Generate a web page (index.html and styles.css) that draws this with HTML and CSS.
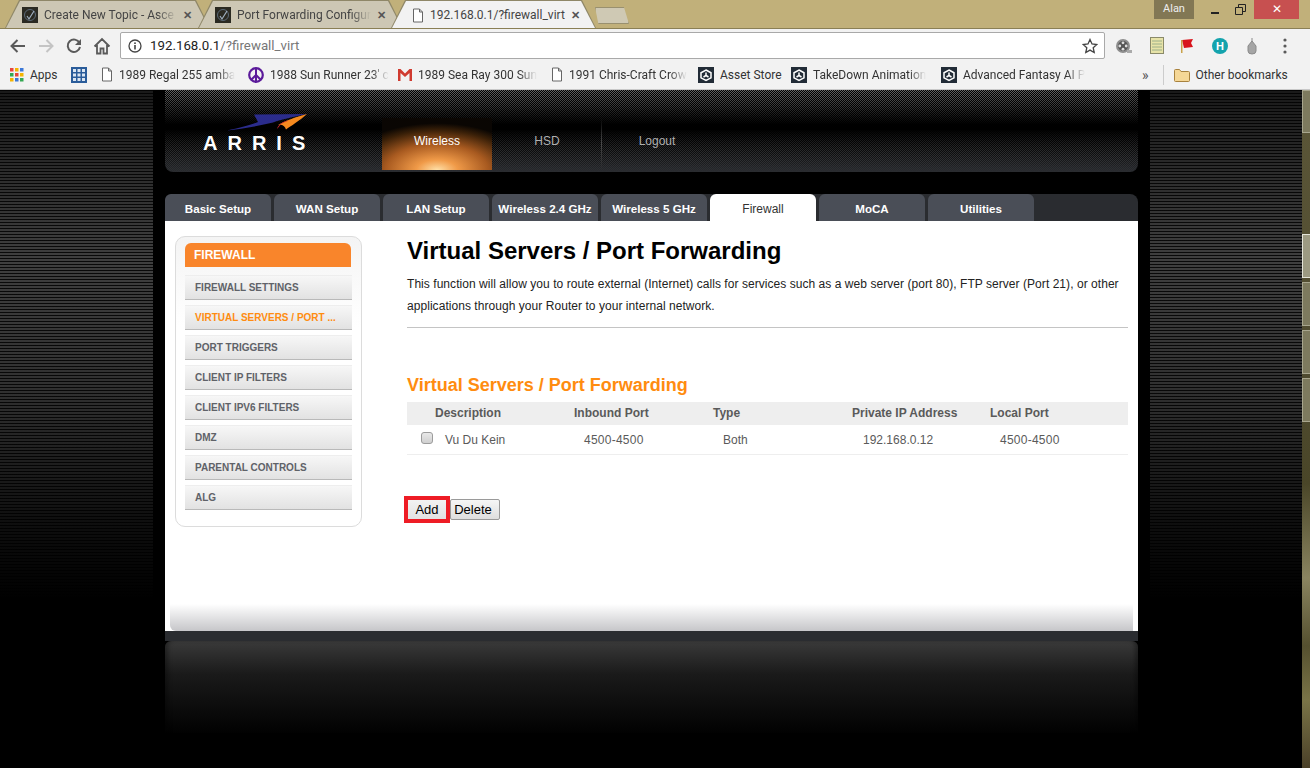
FILE: index.html
```html
<!DOCTYPE html>
<html lang="en">
<head>
    <meta charset="UTF-8">
    <title>192.168.0.1/?firewall_virt</title>
    <link rel="stylesheet" href="styles.css">
</head>
<body>

    <!-- Browser chrome -->
    <div class="tabstrip">
        <div class="tab tab-one">
            <span class="favicon-dark"><svg width="16" height="16" viewBox="0 0 16 16"><circle cx="8" cy="8" r="5.5" fill="none" stroke="#5c6a78" stroke-width="1"/><path d="M5 9l2 3 5-8" fill="none" stroke="#9fb0c0" stroke-width="1.2"/></svg></span>
            <span class="tab-title">Create New Topic - Asce</span>
            <span class="tab-close">✕</span>
        </div>
        <div class="tab tab-two">
            <span class="favicon-dark"><svg width="16" height="16" viewBox="0 0 16 16"><circle cx="8" cy="8" r="5.5" fill="none" stroke="#5c6a78" stroke-width="1"/><path d="M5 9l2 3 5-8" fill="none" stroke="#9fb0c0" stroke-width="1.2"/></svg></span>
            <span class="tab-title">Port Forwarding Configur</span>
            <span class="tab-close">✕</span>
        </div>
        <div class="tab tab-active">
            <svg class="page-icon" width="12" height="15" viewBox="0 0 12 15"><path d="M1.5 1h6l3 3v10h-9z M7.5 1v3h3" fill="#fff" stroke="#666"/></svg>
            <span class="tab-title tab-title-full">192.168.0.1/?firewall_virt</span>
            <span class="tab-close">✕</span>
        </div>
        <div class="tab-new"></div>
        <div class="window-controls">
            <span class="profile">Alan</span>
            <svg class="win-btn" width="46" height="20" viewBox="0 0 46 20"><rect x="17" y="12" width="8" height="2" fill="#222"/></svg>
            <svg class="win-btn win-restore" width="26" height="20" viewBox="0 0 26 20"><path d="M7.5 7.5h7v7h-7z M10.5 7.500v-3h7v7h-3" fill="none" stroke="#222"/></svg>
            <span class="win-close">✕</span>
        </div>
    </div>

    <div class="toolbar">
        <svg class="nav-icon" width="20" height="20" viewBox="0 0 20 20"><path d="M17 10H4M9.5 4L3.5 10l6 6" fill="none" stroke="#5a5a5a" stroke-width="2"/></svg>
        <svg class="nav-icon" width="20" height="20" viewBox="0 0 20 20"><path d="M3 10h13M10.5 4l6 6-6 6" fill="none" stroke="#c4c4c4" stroke-width="2"/></svg>
        <svg class="nav-icon" width="20" height="20" viewBox="0 0 20 20"><path d="M15.5 7A6.200 6.200 0 1 0 16 11" fill="none" stroke="#5a5a5a" stroke-width="2"/><path d="M17 3v6h-6z" fill="#5a5a5a"/></svg>
        <svg class="nav-icon" width="20" height="20" viewBox="0 0 20 20"><path d="M2.500 10.500L10 3l7.500 7.500M5 9v8.500h3.500v-5h3v5H15V9" fill="none" stroke="#5a5a5a" stroke-width="1.8"/></svg>
        <div class="omnibox">
            <svg width="14" height="14" viewBox="0 0 14 14"><circle cx="7" cy="7" r="6" fill="none" stroke="#444" stroke-width="1.3"/><rect x="6.200" y="6" width="1.6" height="4.5" fill="#444"/><rect x="6.200" y="3.400" width="1.6" height="1.6" fill="#444"/></svg>
            <span class="url"><span class="url-host">192.168.0.1</span>/?firewall_virt</span>
            <svg class="star" width="16" height="16" viewBox="0 0 16 16"><path d="M8 1.500l2 4.500 4.800.5-3.600 3.200 1 4.800L8 12.100l-4.200 2.400 1-4.800L1.200 6.500 6 6z" fill="none" stroke="#444" stroke-width="1.3"/></svg>
        </div>
        <div class="extensions">
            <svg width="18" height="18" viewBox="0 0 18 18"><circle cx="8" cy="9" r="7" fill="#8d8d8d"/><circle cx="8" cy="9" r="5" fill="#555"/><circle cx="8" cy="5.800" r="1.4" fill="#ddd"/><circle cx="8" cy="12.200" r="1.4" fill="#ddd"/><circle cx="4.800" cy="9" r="1.4" fill="#ddd"/><circle cx="11.200" cy="9" r="1.4" fill="#ddd"/><rect x="12" y="13" width="5" height="3" fill="#aaa"/></svg>
            <svg width="14" height="17" viewBox="0 0 14 17"><rect x=".5" y=".5" width="13" height="16" fill="#e7e3a8" stroke="#8a8a6a"/><path d="M2 4h10M2 7h10M2 10h10M2 13h10" stroke="#9cb08a"/></svg>
            <svg width="14" height="16" viewBox="0 0 14 16"><path d="M2 2l11-1-2 4 2 4-9 1z" fill="#d8141c"/><rect x="1" y="2" width="1.5" height="13" fill="#c9a24a"/></svg>
            <svg width="18" height="18" viewBox="0 0 18 18"><circle cx="9" cy="9" r="8" fill="#14a3ad"/><text class="ext-letter" x="9" y="13" text-anchor="middle">H</text></svg>
            <svg width="14" height="18" viewBox="0 0 14 18"><path d="M7 1v4M3 9l4-5 4 5v5a4 3 0 0 1-8 0z" fill="#a5a5a5" stroke="#8a8a8a"/></svg>
            <svg class="menu-dots" width="4" height="16" viewBox="0 0 4 16"><circle cx="2" cy="2" r="1.6" fill="#5a5a5a"/><circle cx="2" cy="8" r="1.6" fill="#5a5a5a"/><circle cx="2" cy="14" r="1.6" fill="#5a5a5a"/></svg>
        </div>
    </div>

    <div class="bookmarks">
        <a class="bm bm-apps">
            <svg width="14" height="14" viewBox="0 0 14 14"><rect width="3.5" height="3.5" fill="#e8453c"/><rect x="5" width="3.5" height="3.5" fill="#f4b400"/><rect x="10" width="3.5" height="3.5" fill="#3c78d8"/><rect y="5" width="3.5" height="3.5" fill="#34a853"/><rect x="5" y="5" width="3.5" height="3.5" fill="#e8453c"/><rect x="10" y="5" width="3.5" height="3.5" fill="#f4b400"/><rect y="10" width="3.5" height="3.5" fill="#f4b400"/><rect x="5" y="10" width="3.5" height="3.5" fill="#3c78d8"/><rect x="10" y="10" width="3.5" height="3.5" fill="#34a853"/></svg>
            <span>Apps</span>
        </a>
        <svg class="bm-grid" width="16" height="16" viewBox="0 0 16 16"><rect width="16" height="16" fill="#2a5c9a"/><path d="M2 2h3v3H2zm4.500 0h3v3h-3zM11 2h3v3h-3zM2 6.500h3v3H2zm4.500 0h3v3h-3zm4.500 0h3v3h-3zM2 11h3v3H2zm4.500 0h3v3h-3zm4.500 0h3v3h-3z" fill="#dbe6f2"/></svg>
        <a class="bm bm-a"><svg width="12" height="15" viewBox="0 0 12 15"><path d="M1.5 1h6l3 3v10h-9z M7.5 1v3h3" fill="#fff" stroke="#666"/></svg><span class="bm-label">1989 Regal 255 amba</span></a>
        <a class="bm bm-b"><svg width="16" height="16" viewBox="0 0 16 16"><circle cx="8" cy="8" r="6.800" fill="none" stroke="#5b1a9a" stroke-width="2.2"/><path d="M8 1v14M8 8l-5 5M8 8l5 5" stroke="#5b1a9a" stroke-width="2"/></svg><span class="bm-label">1988 Sun Runner 23' c</span></a>
        <a class="bm bm-c"><svg width="14" height="12" viewBox="0 0 14 12"><path d="M0 0h2.500L7 4.500 11.500 0H14v12h-2.500V4L7 8 2.500 4v8H0z" fill="#d03a2f"/></svg><span class="bm-label">1989 Sea Ray 300 Sun</span></a>
        <a class="bm bm-d"><svg width="12" height="15" viewBox="0 0 12 15"><path d="M1.5 1h6l3 3v10h-9z M7.5 1v3h3" fill="#fff" stroke="#666"/></svg><span class="bm-label">1991 Chris-Craft Crow</span></a>
        <a class="bm bm-e"><svg width="16" height="16" viewBox="0 0 16 16"><rect width="16" height="16" fill="#222c37"/><path d="M8 3l5 2.800v5L8 13.500 3 10.800v-5zM8 5.500v3l-2.500 1.500M8 8.500l2.500 1.500" fill="none" stroke="#fff" stroke-width="1.5"/></svg><span>Asset Store</span></a>
        <a class="bm bm-f"><svg width="16" height="16" viewBox="0 0 16 16"><rect width="16" height="16" fill="#222c37"/><path d="M8 3l5 2.800v5L8 13.500 3 10.800v-5zM8 5.500v3l-2.500 1.500M8 8.500l2.500 1.500" fill="none" stroke="#fff" stroke-width="1.5"/></svg><span class="bm-label">TakeDown Animation</span></a>
        <a class="bm bm-g"><svg width="16" height="16" viewBox="0 0 16 16"><rect width="16" height="16" fill="#222c37"/><path d="M8 3l5 2.800v5L8 13.500 3 10.800v-5zM8 5.500v3l-2.500 1.500M8 8.500l2.500 1.500" fill="none" stroke="#fff" stroke-width="1.5"/></svg><span class="bm-label">Advanced Fantasy AI P</span></a>
        <span class="bm-more">»</span>
        <a class="bm bm-other"><svg width="16" height="14" viewBox="0 0 16 14"><path d="M.5 2.500a1 1 0 0 1 1-1h4l1.500 2h7.500a1 1 0 0 1 1 1v8a1 1 0 0 1-1 1h-13a1 1 0 0 1-1-1z" fill="#f5d796" stroke="#a8823e"/></svg><span>Other bookmarks</span></a>
    </div>

    <!-- Router page -->
    <div class="page">
        <div class="stripes stripes-left"></div>

        <div class="router">
            <div class="header">
                <div class="logo">
                    <svg width="80" height="18" viewBox="0 0 80 18">
                        <path d="M0 17.500C12 15 24 12 31 9L27 1.500 80 1C66 4 52 7 46 9.500 32 13 14 16 0 17.500z" fill="#2b2c8c"/>
                        <path d="M80 1C72 8 64 13 59 16.500 58 12 54 11 51 12 58 8 68 4 80 1z" fill="#f58a1f"/>
                        <path d="M50 16C51 12 56 8 62 7.500 56 9.500 54 11 53 12.500 52 13.500 51 15 50 16z" fill="#c9252c"/>
                    </svg>
                    <div class="logo-text">ARRIS</div>
                </div>
                <nav class="mainnav">
                    <a class="mainnav-item active">Wireless</a>
                    <a class="mainnav-item sep">HSD</a>
                    <a class="mainnav-item">Logout</a>
                </nav>
            </div>

            <div class="tabs">
                <a class="rtab">Basic Setup</a>
                <a class="rtab">WAN Setup</a>
                <a class="rtab">LAN Setup</a>
                <a class="rtab">Wireless 2.4 GHz</a>
                <a class="rtab">Wireless 5 GHz</a>
                <a class="rtab current">Firewall</a>
                <a class="rtab">MoCA</a>
                <a class="rtab">Utilities</a>
            </div>

            <div class="content">
                <div class="columns">
                    <aside class="sidebar">
                        <div class="side-head">FIREWALL</div>
                        <a class="side-item">FIREWALL SETTINGS</a>
                        <a class="side-item selected">VIRTUAL SERVERS / PORT ...</a>
                        <a class="side-item">PORT TRIGGERS</a>
                        <a class="side-item">CLIENT IP FILTERS</a>
                        <a class="side-item">CLIENT IPV6 FILTERS</a>
                        <a class="side-item">DMZ</a>
                        <a class="side-item">PARENTAL CONTROLS</a>
                        <a class="side-item">ALG</a>
                    </aside>

                    <main class="main">
                        <h1>Virtual Servers / Port Forwarding</h1>
                        <p>This function will allow you to route external (Internet) calls for services such as a web server (port 80), FTP server (Port 21), or other applications through your Router to your internal network.</p>
                        <div class="rule"></div>
                        <h2>Virtual Servers / Port Forwarding</h2>
                        <table class="servers">
                            <thead>
                                <tr>
                                    <th class="col-desc">Description</th>
                                    <th class="col-in">Inbound Port</th>
                                    <th class="col-type">Type</th>
                                    <th class="col-ip">Private IP Address</th>
                                    <th class="col-local">Local Port</th>
                                </tr>
                            </thead>
                            <tbody>
                                <tr>
                                    <td class="col-desc"><input type="checkbox" class="row-check"><span>Vu Du Kein</span></td>
                                    <td class="col-in cell-in">4500-4500</td>
                                    <td class="col-type cell-type">Both</td>
                                    <td class="col-ip cell-ip">192.168.0.12</td>
                                    <td class="col-local cell-local">4500-4500</td>
                                </tr>
                            </tbody>
                        </table>
                        <div class="actions">
                            <button class="btn btn-marked">Add</button>
                            <button class="btn btn-delete">Delete</button>
                        </div>
                    </main>
                </div>
                <div class="content-foot"></div>
            </div>

            <div class="foot-band"></div>
            <div class="foot-panel"></div>
        </div>

        <div class="stripes stripes-right"></div>

        <div class="desktop-edge">
            <div class="edge-chip edge-first"></div>
            <div class="edge-chip edge-light"></div>
            <div class="edge-chip"></div>
            <div class="edge-chip"></div>
            <div class="edge-chip"></div>
        </div>
    </div>

</body>
</html>
```

FILE: styles.css
```css
:root {
    --chrome-tan: #c1b07a;
    --chrome-bar: #f2f2f2;
    --orange: #f9852b;
    --orange-text: #ff8c10;
    --tab-grey: #4a4e57;
    --band: #2a2c30;
    --text: #5a5a5a;
}

* {
    box-sizing: border-box;
}

html, body {
    height: 100%;
}

body {
    margin: 0;
    height: 768px;
    overflow: hidden;
    display: flex;
    flex-direction: column;
    font-family: "Liberation Sans", Arial, sans-serif;
    background: #000;
}

/* Browser chrome */

.tabstrip {
    height: 29px;
    flex: none;
    display: flex;
    background: var(--chrome-tan);
    border-bottom: 1px solid #8a7f55;
    font-family: Roboto, "Noto Sans", sans-serif;
    font-size: 12px;
    color: #444;
}

.tab {
    position: relative;
    isolation: isolate;
    height: 28px;
    width: 205px;
    margin-right: -12px;
    padding: 2px 18px 0 17px;
    display: flex;
    align-items: center;
    gap: 6px;
    background: #8f8768;
    clip-path: polygon(0 100%, 14px 0, calc(100% - 14px) 0, 100% 100%);
    white-space: nowrap;
}

.tab::before {
    content: "";
    position: absolute;
    inset: 1px 1px 0;
    z-index: -1;
    background: #cdc7b4;
    clip-path: polygon(0 100%, 14px 0, calc(100% - 14px) 0, 100% 100%);
}

.tab-one {
    margin-left: 5px;
}

.tab-active {
    padding: 2px 16px 0 21px;
    z-index: 1;
}

.tab-active::before {
    background: var(--chrome-bar);
}

.favicon-dark {
    width: 16px;
    height: 16px;
    flex: none;
    background: #2b2a22;
}

.favicon-dark svg,
.page-icon {
    display: block;
    flex: none;
}

.tab-title {
    flex: 1;
    -webkit-mask-image: linear-gradient(90deg, #000 85%, transparent);
}

.tab-title-full {
    -webkit-mask-image: none;
}

.tab-close {
    font-size: 11px;
    font-weight: bold;
    color: #555;
}

.tab-new {
    width: 34px;
    height: 17px;
    margin: 7px 0 0 11px;
    background: #cfc9b4;
    border: 1px solid #99906f;
    clip-path: polygon(0 0, 85% 0, 100% 100%, 10% 100%);
}

.window-controls {
    margin-left: auto;
    display: flex;
    align-items: flex-start;
}

.profile {
    width: 40px;
    height: 19px;
    background: #827754;
    color: #eee;
    font-size: 11px;
    line-height: 18px;
    text-align: center;
}

.win-btn {
    display: block;
}

.win-restore {
    margin-left: -12px;
}

.win-close {
    width: 45px;
    height: 19px;
    margin-right: 11px;
    background: #c75050;
    color: #fff;
    font-size: 12px;
    line-height: 19px;
    text-align: center;
}

.toolbar {
    height: 33px;
    flex: none;
    display: flex;
    align-items: center;
    padding-left: 8px;
    background: var(--chrome-bar);
}

.nav-icon {
    margin-right: 8px;
    flex: none;
}

.omnibox {
    width: 985px;
    height: 27px;
    display: flex;
    align-items: center;
    gap: 8px;
    padding: 0 6px 0 7px;
    background: #fff;
    border: 1px solid #a9a9a9;
    border-radius: 2px;
    font-family: Roboto, "Noto Sans", sans-serif;
    font-size: 13.3px;
}

.url {
    flex: 1;
    color: #777;
}

.url-host {
    color: #222;
}

.extensions {
    flex: 1;
    display: flex;
    align-items: center;
    gap: 16.5px;
    padding-left: 10px;
}

.menu-dots {
    margin-left: 7px;
}

.ext-letter {
    font: bold 11px "Liberation Sans", sans-serif;
    fill: #fff;
}

.bookmarks {
    height: 28px;
    flex: none;
    display: flex;
    align-items: center;
    padding: 0 0 2px 10px;
    background: var(--chrome-bar);
    border-bottom: 1px solid #c8c8c8;
    font-family: Roboto, "Noto Sans", sans-serif;
    font-size: 12px;
    color: #333;
    white-space: nowrap;
}

.bm {
    display: flex;
    align-items: center;
    gap: 6px;
    flex: none;
}

.bm svg {
    flex: none;
}

.bm-label {
    -webkit-mask-image: linear-gradient(90deg, #000 85%, transparent);
}

.bm-apps { width: 61px; }
.bm-grid { flex: none; margin-right: 14px; }
.bm-a { width: 147px; }
.bm-b { width: 150px; }
.bm-c { width: 153px; }
.bm-d { width: 147px; }
.bm-e { width: 93px; }
.bm-f { width: 150px; }
.bm-g { width: 144px; }

.bm-more {
    margin-left: 57px;
    padding-right: 14px;
    border-right: 1px solid #ccc;
    font-size: 14px;
    line-height: 20px;
    color: #555;
}

.bm-other {
    margin-left: 10px;
}

/* Router page */

.page {
    flex: 1;
    display: flex;
    min-height: 0;
    background: #000;
}

.stripes {
    flex: none;
    background:
        linear-gradient(rgba(0, 0, 0, .6), rgba(0, 0, 0, 0) 25%, rgba(0, 0, 0, .25) 45%, rgba(0, 0, 0, .8) 65%, #000 75%),
        repeating-linear-gradient(#0a0a0a 0 1px, #3f3f3f 1px 3px);
}

.stripes-left {
    width: 153px;
}

.stripes-right {
    width: 152px;
}

.router {
    width: 973px;
    margin: 0 12px;
    flex: none;
    display: flex;
    flex-direction: column;
}

.header {
    height: 82px;
    flex: none;
    display: flex;
    border-radius: 0 0 8px 8px;
    background:
        linear-gradient(rgba(0, 0, 0, .15), #000 42%, #000 48%, rgba(0, 0, 0, 0) 100%),
        linear-gradient(transparent 50%, var(--band)),
        conic-gradient(#777 25%, transparent 0 50%, #777 0 75%, transparent 0) 0 0 / 2px 2px;
}

.logo {
    width: 217px;
    flex: none;
    padding: 23px 0 0 38px;
}

.logo svg {
    display: block;
    margin-left: 24px;
}

.logo-text {
    margin-top: 4px;
    font-size: 20px;
    font-weight: bold;
    letter-spacing: 10px;
    line-height: 16px;
    color: #fff;
}

.mainnav {
    display: flex;
}

.mainnav-item {
    width: 110px;
    height: 52px;
    margin-top: 28px;
    padding-top: 16px;
    font-size: 12px;
    line-height: 14px;
    text-align: center;
    color: #b0b0b0;
}

.mainnav-item.sep {
    background: linear-gradient(transparent, #4a4a4a 50%, transparent) right / 1px 100% no-repeat;
}

.mainnav-item.active {
    color: #fff;
    background: radial-gradient(ellipse 85% 90% at 50% 100%, #ffe0a8 0, #f09a48 22%, #a85a20 55%, #3a2008 85%, #0a0603 100%);
}

.tabs {
    height: 27px;
    margin-top: 22px;
    flex: none;
    display: flex;
    gap: 3px;
    background: var(--band);
    border-radius: 8px 8px 0 0;
}

.rtab {
    width: 106px;
    font-size: 11.6px;
    font-weight: bold;
    line-height: 30px;
    text-align: center;
    color: #fff;
    background: var(--tab-grey);
    border-radius: 6px 6px 0 0;
    white-space: nowrap;
}

.rtab.current {
    color: #333;
    font-size: 12px;
    font-weight: normal;
    background: #fff;
}

.content {
    height: 410px;
    flex: none;
    display: flex;
    flex-direction: column;
    justify-content: space-between;
    background: #fff;
}

.columns {
    display: flex;
    padding: 15px 10px 0;
    gap: 45px;
}

.sidebar {
    width: 187px;
    height: 291px;
    flex: none;
    padding: 6px 9px 0;
    background: linear-gradient(#f4f4f4, #fff 90px);
    border: 1px solid #dcdcdc;
    border-radius: 10px;
}

.side-head {
    width: 166px;
    height: 24px;
    margin-bottom: 8px;
    padding-left: 9px;
    font-size: 12px;
    font-weight: bold;
    line-height: 25px;
    color: #fff;
    background: var(--orange);
    border-radius: 6px 6px 0 0;
}

.side-item {
    display: block;
    height: 25px;
    margin-bottom: 5px;
    padding-left: 10px;
    font-size: 10px;
    font-weight: bold;
    line-height: 24px;
    color: #5f6268;
    background: linear-gradient(#f7f7f7, #e2e2e2);
    border-top: 1px solid #eee;
    border-bottom: 1px solid #b9b9b9;
    white-space: nowrap;
}

.side-item.selected {
    color: var(--orange-text);
}

.main {
    width: 721px;
    flex: none;
}

h1 {
    margin: 0;
    padding-top: 2px;
    font-size: 24px;
    line-height: 26px;
    color: #000;
}

.main p {
    margin: 9px 0 0;
    font-size: 12px;
    line-height: 22px;
    letter-spacing: .05px;
    color: #222;
}

.rule {
    height: 1px;
    margin-top: 10px;
    background: #c4c4c4;
}

h2 {
    margin: 47px 0 0;
    font-size: 18px;
    line-height: 20px;
    color: var(--orange-text);
}

.servers {
    width: 721px;
    margin-top: 7px;
    border-collapse: collapse;
    table-layout: fixed;
    font-size: 12px;
    color: var(--text);
}

.servers th {
    height: 23px;
    padding: 0 0 2px;
    background: #eee;
    text-align: left;
    font-weight: bold;
}

.servers td {
    height: 29px;
    padding: 1px 0 0;
    border-bottom: 1px solid #eee;
}

.col-desc { width: 167px; }
.col-in { width: 139px; }
.col-type { width: 139px; }
.col-ip { width: 138px; }

.servers th.col-desc {
    padding-left: 28px;
}

.row-check {
    appearance: none;
    width: 12px;
    height: 12px;
    margin: 0 12px 0 14px;
    vertical-align: 0;
    background: linear-gradient(#e9e9e9, #d0d0d0);
    border: 1px solid #9c9c9c;
    border-radius: 3px;
}

.servers .cell-in,
.servers .cell-local {
    padding-left: 10px;
    letter-spacing: .25px;
}

.servers .cell-type {
    padding-left: 10px;
}

.servers .cell-ip {
    padding-left: 11px;
}

.actions {
    display: flex;
    align-items: flex-start;
    margin-top: 44px;
}

.btn {
    height: 21px;
    padding: 0;
    font: 13px "Liberation Sans", Arial, sans-serif;
    color: #000;
    background: linear-gradient(#f6f6f6, #dedede);
    border: 1px solid #9a9a9a;
    border-radius: 2px;
}

.btn-marked {
    width: 46px;
    height: 27px;
    margin: -3px 0 0 -3px;
    border: 0;
    border-radius: 0;
    outline: 4px solid #ee1c25;
    outline-offset: -4px;
}

.btn-delete {
    width: 50px;
    padding-right: 4px;
}

.content-foot {
    height: 27px;
    margin: 0 5px;
    background: linear-gradient(#fff, #c6c6c9);
    border-radius: 0 0 0 6px;
}

.foot-band {
    height: 10px;
    flex: none;
    background: var(--band);
}

.foot-panel {
    height: 95px;
    flex: none;
    background: linear-gradient(#3a3a3a, #1a1a1a 35%, #000);
    border-radius: 6px 6px 0 0;
    box-shadow: inset 5px 0 4px -2px rgba(0, 0, 0, .35), inset -5px 0 4px -2px rgba(0, 0, 0, .35);
}

/* Sliver of the desktop behind the window */

.desktop-edge {
    flex: 1;
    display: flex;
    flex-direction: column;
    gap: 4px;
    background: linear-gradient(#5c5738, #4f4b30 40%, #4a4628 58%, #8a8460 72%, #55502f 82%, #7a7447 90%, #4a4028);
}

.edge-chip {
    height: 44px;
    flex: none;
    background: #7d7a5e;
    border: 1px solid #a8a68e;
    border-right: 0;
}

.edge-first {
    height: 43px;
    margin-bottom: 97px;
}

.edge-light {
    background: #9c9a82;
    border-color: #e4e4d8;
}
```
